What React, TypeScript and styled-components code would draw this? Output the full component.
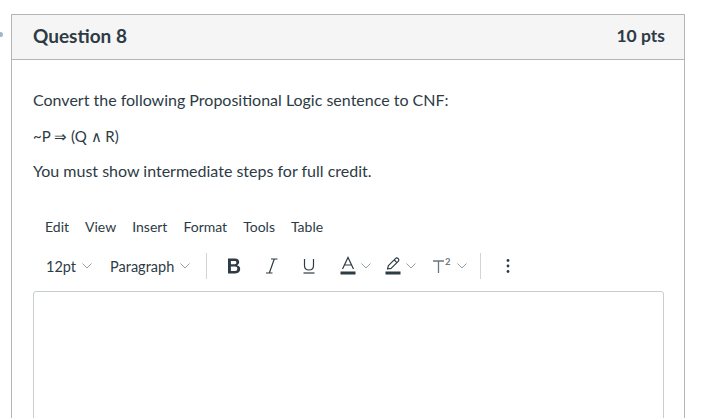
import { FC } from "react";
import styled, { createGlobalStyle } from "styled-components";

const GlobalStyle = createGlobalStyle`
	html, body {
		margin: 0;
		padding: 0;
		background: #ffffff;
		font-family: Lato, "Open Sans", sans-serif;
		color: #2d3b45;
	}
`;

const Page = styled.div`
	position: relative;
	padding: 14px 38px 0 11px;
	height: 418px;
	box-sizing: border-box;
	overflow: hidden;
`;

const EdgeMark = styled.span`
	position: absolute;
	left: -2px;
	top: 32px;
	width: 5px;
	height: 5px;
	border-radius: 50%;
	background: #9fb7c9;
`;

const Card = styled.section`
	border: 1px solid #b5b5b5;
	border-bottom: none;
	height: 420px;
	box-sizing: border-box;
`;

const Header = styled.header`
	display: flex;
	justify-content: space-between;
	align-items: center;
	height: 44px;
	padding: 0 19px 0 21px;
	background: #f5f5f5;
	border-bottom: 1px solid #b5b5b5;
`;

const Title = styled.h2`
	margin: 0 0 3px;
	font-size: 19px;
	line-height: 24px;
	font-weight: 700;
	color: #2d3b45;
`;

const Points = styled.span`
	margin-bottom: 3px;
	font-size: 17.5px;
	line-height: 24px;
	font-weight: 700;
	color: #2d3b45;
`;

const Body = styled.div`
	padding: 28px 20px 0 21px;
`;

const Para = styled.p`
	margin: 0 0 12px;
	font-size: 16px;
	line-height: 24px;
`;

const Formula = styled(Para)`
	font-size: 15px;
	margin-bottom: 11px;
`;

const Editor = styled.div`
	margin-top: 34px;
`;

const MenuBar = styled.div`
	display: flex;
	gap: 16px;
	padding-left: 12px;
	font-size: 14px;
	line-height: 20px;
	color: #2d3b45;
`;

const Toolbar = styled.div`
	display: flex;
	align-items: center;
	height: 36px;
	margin-top: 11px;
	padding-left: 13px;
	font-size: 14.5px;
	color: #2d3b45;
`;

const Drop = styled.span<{ $gap?: number }>`
	display: inline-flex;
	align-items: center;
	gap: 6px;
	margin-right: ${({ $gap }) => $gap ?? 0}px;
`;

const Sep = styled.span<{ $after: number }>`
	width: 1px;
	height: 26px;
	background: #d0d5d9;
	margin-right: ${({ $after }) => $after}px;
`;

const IconBtn = styled.span<{ $w: number }>`
	display: inline-flex;
	align-items: center;
	gap: 5px;
	width: ${({ $w }) => $w}px;
`;

const TextArea = styled.div`
	margin-top: 7px;
	height: 200px;
	border: 1px solid #c7cdd1;
	border-radius: 3px;
`;

const Chevron: FC = () => (
	<svg width="10" height="6" viewBox="0 0 10 6" fill="none">
		<path d="M0.5 0.5 L5 5 L9.5 0.5" stroke="#8a949b" strokeWidth="0.9" />
	</svg>
);

const BoldIcon: FC = () => (
	<svg width="15" height="18" viewBox="0 0 15 18">
		<path
			d="M1 1.5 H8 C10.8 1.5 12.2 3 12.2 5.1 C12.2 6.7 11.3 7.8 9.9 8.3 C11.8 8.6 13.2 10 13.2 12.1 C13.2 14.7 11.4 16.5 8.4 16.5 H1 Z M3.9 4 V7.3 H7.8 C8.9 7.3 9.4 6.6 9.4 5.6 C9.4 4.6 8.9 4 7.8 4 Z M3.9 9.6 V14 H8.2 C9.5 14 10.3 13.3 10.3 11.8 C10.3 10.4 9.5 9.6 8.2 9.6 Z"
			fill="#2d3b45"
			fillRule="evenodd"
		/>
	</svg>
);

const ItalicIcon: FC = () => (
	<svg width="14" height="18" viewBox="0 0 14 18" fill="none">
		<path d="M6 2 H12.5 M1 16 H7.5 M9.3 2 L4.3 16" stroke="#2d3b45" strokeWidth="1.2" />
	</svg>
);

const UnderlineIcon: FC = () => (
	<svg width="14" height="18" viewBox="0 0 14 18" fill="none">
		<path d="M2.5 2 V8.5 C2.5 11.3 4.3 13 7 13 C9.7 13 11.5 11.3 11.5 8.5 V2" stroke="#2d3b45" strokeWidth="1.2" />
		<path d="M1.5 16 H12.5" stroke="#2d3b45" strokeWidth="1.2" />
	</svg>
);

const ColorIcon: FC = () => (
	<svg width="16" height="20" viewBox="0 0 16 20" fill="none">
		<path d="M2.5 13 L8 1.5 L13.5 13 M4.5 9 H11.5" stroke="#2d3b45" strokeWidth="1.2" />
		<rect x="0.5" y="15.5" width="15" height="3" fill="#2d3b45" />
	</svg>
);

const HighlightIcon: FC = () => (
	<svg width="16" height="20" viewBox="0 0 16 20" fill="none">
		<path
			d="M2.5 13 L3.4 9.7 L10.5 2.6 C11.3 1.8 12.4 1.8 13.2 2.6 C14 3.4 14 4.5 13.2 5.3 L6.1 12.4 Z M9.2 3.9 L11.9 6.6"
			stroke="#2d3b45"
			strokeWidth="1.2"
			strokeLinejoin="round"
		/>
		<rect x="0.5" y="15.5" width="15" height="3" fill="#2d3b45" />
	</svg>
);

const SuperIcon: FC = () => (
	<svg width="20" height="18" viewBox="0 0 20 18" fill="none">
		<path d="M1 4 H12 M6.5 4 V16" stroke="#6b7780" strokeWidth="1.3" />
		<text x="13" y="8" fontSize="9.5" fontFamily="Lato, sans-serif" fontWeight="700" fill="#6b7780">
			2
		</text>
	</svg>
);

const MoreIcon: FC = () => (
	<svg width="4" height="16" viewBox="0 0 4 16">
		<circle cx="2" cy="2.5" r="1.4" fill="#2d3b45" />
		<circle cx="2" cy="8" r="1.4" fill="#2d3b45" />
		<circle cx="2" cy="13.5" r="1.4" fill="#2d3b45" />
	</svg>
);

export default function App() {
	return (
		<>
			<GlobalStyle />
			<Page>
				<EdgeMark />
				<Card>
					<Header>
						<Title>Question 8</Title>
						<Points>10 pts</Points>
					</Header>
					<Body>
						<Para>Convert the following Propositional Logic sentence to CNF:</Para>
						<Formula>~P ⇒ (Q ∧ R)</Formula>
						<Para>You must show intermediate steps for full credit.</Para>
						<Editor>
							<MenuBar>
								<span>Edit</span>
								<span>View</span>
								<span>Insert</span>
								<span>Format</span>
								<span>Tools</span>
								<span>Table</span>
							</MenuBar>
							<Toolbar>
								<Drop $gap={18}>
									12pt <Chevron />
								</Drop>
								<Drop $gap={16}>
									Paragraph <Chevron />
								</Drop>
								<Sep $after={20} />
								<IconBtn $w={38}>
									<BoldIcon />
								</IconBtn>
								<IconBtn $w={37}>
									<ItalicIcon />
								</IconBtn>
								<IconBtn $w={38}>
									<UnderlineIcon />
								</IconBtn>
								<IconBtn $w={45}>
									<ColorIcon />
									<Chevron />
								</IconBtn>
								<IconBtn $w={47}>
									<HighlightIcon />
									<Chevron />
								</IconBtn>
								<IconBtn $w={48}>
									<SuperIcon />
									<Chevron />
								</IconBtn>
								<Sep $after={25} />
								<IconBtn $w={10}>
									<MoreIcon />
								</IconBtn>
							</Toolbar>
							<TextArea />
						</Editor>
					</Body>
				</Card>
			</Page>
		</>
	);
}
